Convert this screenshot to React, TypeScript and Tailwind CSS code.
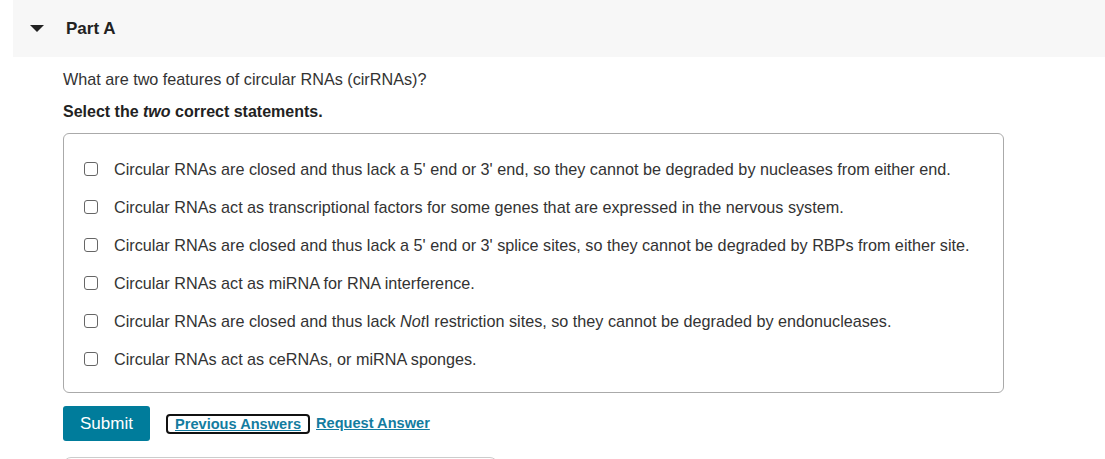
const options = [
  <>Circular RNAs are closed and thus lack a 5' end or 3' end, so they cannot be degraded by nucleases from either end.</>,
  <>Circular RNAs act as transcriptional factors for some genes that are expressed in the nervous system.</>,
  <>Circular RNAs are closed and thus lack a 5' end or 3' splice sites, so they cannot be degraded by RBPs from either site.</>,
  <>Circular RNAs act as miRNA for RNA interference.</>,
  <>
    Circular RNAs are closed and thus lack <i>Not</i>I restriction sites, so they cannot be degraded by endonucleases.
  </>,
  <>Circular RNAs act as ceRNAs, or miRNA sponges.</>,
];

export default function App() {
  return (
    <div className="w-[1105px] h-[459px] overflow-hidden bg-white text-[#333] font-['Liberation_Sans',Arial,sans-serif]">
      {/* HEADER */}
      <div className="ml-[13px] h-[57px] bg-[#f7f7f7] flex items-center">
        <span className="ml-[17px] w-0 h-0 border-l-[7px] border-r-[7px] border-t-[7px] border-l-transparent border-r-transparent border-t-[#222]" />
        <h2 className="ml-[22px] text-[17px] font-bold text-[#222]">Part A</h2>
      </div>

      <div className="pl-[63px] pt-[13px]">
        <p className="text-[16.2px] leading-[19px]">What are two features of circular RNAs (cirRNAs)?</p>
        <p className="mt-[13px] text-[16px] leading-[19px] font-bold text-[#222]">
          Select the <i>two</i> correct statements.
        </p>

        <div className="mt-[12px] w-[941px] h-[260px] rounded-[6px] border border-[#aaa] pt-[16px] pl-[20px]">
          {options.map((opt, i) => (
            <label key={i} className="flex items-center h-[38px] text-[16.2px]">
              <span className="shrink-0 w-[14px] h-[14px] rounded-[3px] border border-[#666] bg-white" />
              <span className="ml-[16px]">{opt}</span>
            </label>
          ))}
        </div>

        <div className="mt-[13px] flex items-center">
          <button className="w-[87px] h-[35px] rounded-[3px] bg-[#007c9b] text-white text-[17px]">Submit</button>
          <a className="ml-[16px] rounded-[4px] border-2 border-[#111] px-[7px] leading-[16px] text-[14.6px] font-bold text-[#137ca0] underline">
            Previous Answers
          </a>
          <a className="ml-[6px] text-[14.6px] font-bold text-[#137ca0] underline">Request Answer</a>
        </div>

        <div className="mt-[16px] w-[435px] h-[20px] rounded-t-[8px] border border-[#ccc]" />
      </div>
    </div>
  );
}
